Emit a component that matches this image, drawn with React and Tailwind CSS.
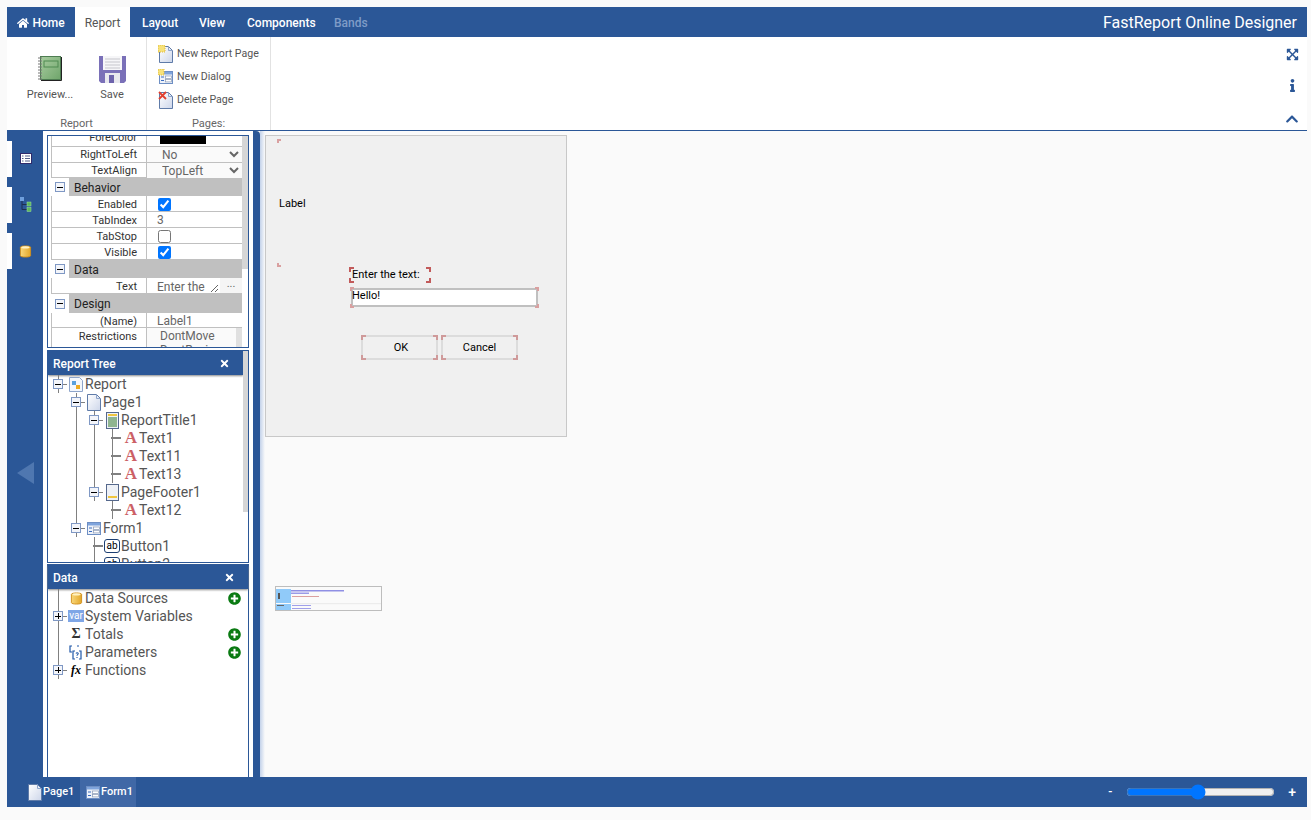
import React from 'react';
import { FaHome, FaExpandArrowsAlt, FaInfo, FaChevronUp, FaTimes, FaPlusCircle } from 'react-icons/fa';

const FONT = "font-['Roboto',_Tahoma,_sans-serif]";

const PageIcon = ({ star, cross }) => (
  <svg width="16" height="18" viewBox="0 0 16 18">
    <defs>
      <linearGradient id="pageFill" x1="0" y1="0" x2="1" y2="1">
        <stop offset="0" stopColor="#ffffff" />
        <stop offset="1" stopColor="#cdd6ea" />
      </linearGradient>
    </defs>
    <path d="M1.5 1.5h9l4 4v12h-13z" fill="url(#pageFill)" stroke="#5f7ba8" />
    <path d="M10.5 1.5v4h4" fill="none" stroke="#8ea5cb" />
    {star && <rect x="0" y="0" width="7" height="7" fill="#f7e27a" stroke="#e0b93a" strokeDasharray="1 1" />}
    {cross && <path d="M1 1l7 7M8 1L1 8" stroke="#e2402f" strokeWidth="1.8" />}
  </svg>
);

const FormIcon = ({ star }) => (
  <svg width="16" height="16" viewBox="0 0 16 16">
    <rect x="1.5" y="2.5" width="13" height="12" fill="#eef2f9" stroke="#6e8fc4" />
    <rect x="2" y="3" width="12" height="2.5" fill="#7fa4dc" />
    <path d="M3 8h3M3 11.5h3" stroke="#3b6cc0" strokeWidth="1.2" />
    <rect x="7.5" y="7" width="6" height="2.4" fill="#fff" stroke="#8a9ab5" strokeWidth=".7" />
    <rect x="7.5" y="10.5" width="6" height="2.4" fill="#fff" stroke="#8a9ab5" strokeWidth=".7" />
    {star && <rect x="0" y="0" width="6" height="6" fill="#f7e27a" stroke="#e0b93a" strokeDasharray="1 1" />}
  </svg>
);

const NotebookIcon = () => (
  <svg width="24" height="25" viewBox="0 0 24 25">
    <defs>
      <linearGradient id="bookFill" x1="0" y1="0" x2="1" y2="1">
        <stop offset="0" stopColor="#a9cda0" />
        <stop offset="1" stopColor="#6fa56b" />
      </linearGradient>
    </defs>
    <rect x="2.5" y=".5" width="20" height="23" fill="url(#bookFill)" stroke="#4e7d52" />
    <path d="M23.5 1v23.5H3" stroke="#222" fill="none" />
    <rect x="6" y="5" width="14" height="6" fill="none" stroke="#4e8a50" />
    <path d="M0 2h4M0 5h4M0 8h4M0 11h4M0 14h4M0 17h4M0 20h4M0 23h4" stroke="#777" strokeWidth="1.2" />
  </svg>
);

const FloppyIcon = () => (
  <svg width="27" height="27" viewBox="0 0 27 27">
    <path d="M0 0h27v25l-2 2H2l-2-2z" fill="#7a70b8" />
    <rect x="4" y="0" width="19" height="14" fill="#f6f6f8" />
    <path d="M6 3h15M6 6h15M6 9h15M6 12h15" stroke="#c6c6cc" />
    <rect x="6" y="17" width="15" height="10" fill="#e8e8ee" />
    <rect x="10" y="19" width="5" height="8" fill="#6d63ac" />
  </svg>
);

const TableIcon = () => (
  <svg width="12" height="11" viewBox="0 0 12 11" className="-mt-[2px]">
    <rect x=".5" y=".5" width="11" height="10" fill="#fff" stroke="#2f2a6b" />
    <path d="M2 3h1.5M5 3h5M2 5.5h1.5M5 5.5h5M2 8h1.5M5 8h5" stroke="#55608c" />
  </svg>
);

const TreeSmallIcon = () => (
  <svg width="12" height="15" viewBox="0 0 12 15" className="-mt-[2px]">
    <rect x="0" y="0" width="4" height="4" fill="#6f9fdc" />
    <path d="M2 4v8.5h5M2 7.5h5" stroke="#1f2f4f" fill="none" />
    <rect x="7" y="5" width="4" height="4" fill="#5cb85c" stroke="#9fe09f" strokeWidth=".5" />
    <rect x="7" y="10.5" width="4" height="4" fill="#5cb85c" stroke="#9fe09f" strokeWidth=".5" />
  </svg>
);

const DbIcon = ({ size = 14 }) => (
  <svg width={size} height={size} viewBox="0 0 14 14">
    <defs>
      <linearGradient id="dbFill" x1="0" y1="0" x2="1" y2="0">
        <stop offset="0" stopColor="#f9d77a" />
        <stop offset="1" stopColor="#e3a72a" />
      </linearGradient>
    </defs>
    <path d="M1.5 2.5C1.5 .5 12.5 .5 12.5 2.5v9c0 2-11 2-11 0z" fill="url(#dbFill)" stroke="#d18f1c" />
    <ellipse cx="7" cy="2.6" rx="4.4" ry="1.2" fill="#fff2c4" />
  </svg>
);

const ReportIcon = () => (
  <svg width="14" height="15" viewBox="0 0 14 15">
    <path d="M.5.5h10l3 3v11H.5z" fill="#f4f7fc" stroke="#8ea5cb" />
    <rect x="3" y="4" width="4" height="4" fill="#5aa0dc" />
    <rect x="7" y="8" width="4" height="4" fill="#eeaa1f" />
  </svg>
);

const BandIcon = ({ bottom, fill }) => (
  <svg width="13" height="17" viewBox="0 0 13 17">
    <rect x=".5" y=".5" width="12" height="16" fill="#eef1f7" stroke="#55688c" />
    {fill && <rect x="2" y="5" width="9" height="10" fill="#8fb58f" />}
    <rect x="2" y={bottom ? 12 : 2} width="9" height="2" fill="#efc53f" />
  </svg>
);

const TextIcon = () => (
  <span className="w-[18px] pl-[2px] text-center font-['Liberation_Serif',_serif] text-[17px] leading-[18px] font-bold text-[#cc6066]">A</span>
);

const ButtonIcon = () => (
  <span className="flex h-[14px] w-[16px] items-center justify-center rounded-[3px] border border-[#1c3f72] bg-white text-[10px] leading-none text-black">ab</span>
);

const ParamIcon = () => (
  <svg width="14" height="15" viewBox="0 0 14 15">
    <path d="M3 1H1v6h2M8 1h2" stroke="#1f57a8" fill="none" strokeWidth="1.2" />
    <path d="M6 6H4v8h2M10 6h2v8h-2" stroke="#1f57a8" fill="none" strokeWidth="1.2" />
    <path d="M7 8.5c.5-1.2 2.4-1 2.2.3-.1.9-1.2.9-1.2 2M8 12v1" stroke="#1f57a8" fill="none" strokeWidth="1.1" />
  </svg>
);

const TreeCell = ({ kind }) => {
  const isExp = kind === 'minus' || kind === 'plus';
  return (
    <span className="relative h-[18px] w-[18px] shrink-0">
      {kind === 'line' && <span className="absolute top-0 bottom-0 left-[8.5px] w-px bg-[#808080]" />}
      {kind === 'node' && (
        <>
          <span className="absolute top-0 bottom-0 left-[8.5px] w-px bg-[#808080]" />
          <span className="absolute top-[8px] left-[8px] h-[2px] w-[10px] bg-[#808080]" />
        </>
      )}
      {isExp && (
        <>
          <span className="absolute top-0 bottom-0 left-[8.5px] w-px bg-[#808080]" />
          <span className="absolute top-[8.5px] left-[12px] h-px w-[6px] bg-[#808080]" />
          <span className="absolute top-[4px] left-[4px] flex h-[10px] w-[10px] items-center justify-center border border-[#7f98c4] bg-[#f3f5fa]">
            <span className="h-px w-[6px] bg-black" />
            {kind === 'plus' && <span className="absolute h-[6px] w-px bg-black" />}
          </span>
        </>
      )}
    </span>
  );
};

const TreeRow = ({ cells, icon, text, add }) => (
  <div className="flex h-[18px] items-center">
    {cells.map((c, i) => <TreeCell key={i} kind={c} />)}
    <span className="flex h-[18px] w-[18px] shrink-0 items-center justify-center">{icon}</span>
    <span className="text-[14px] leading-[18px] whitespace-nowrap text-[#555]">{text}</span>
    {add && <FaPlusCircle className="mr-[2px] ml-auto text-[13px] text-[#0a7a12]" />}
  </div>
);

const PropRow = ({ name, children, h = 'h-[16px]', lead = 'leading-[18px]' }) => (
  <div className={`flex border-b border-[#c0c0c0] ${h}`}>
    <div className={`w-[96px] border-r border-l border-[#c0c0c0] pr-[9px] text-right text-[11px] text-[#333] ${lead}`}>{name}</div>
    <div className="flex w-[95px] items-center pl-[10px] text-[12px] leading-[15px] text-[#666]">{children}</div>
  </div>
);

const PropGroup = ({ name, h = 'h-[18px]' }) => (
  <div className={`flex ${h}`}>
    <div className="flex w-[18px] items-center justify-center bg-white">
      <span className="flex h-[10px] w-[10px] items-center justify-center border border-[#7f98c4] bg-[#f3f5fa]">
        <span className="h-px w-[6px] bg-black" />
      </span>
    </div>
    <div className="flex-1 bg-[#c0c0c0] pl-[5px] text-[12px] leading-[20px] text-[#222]">{name}</div>
  </div>
);

const PanelHeader = ({ title }) => (
  <div className="flex h-[24px] shrink-0 items-center justify-between bg-[#2b5797] pr-[13px] pl-[5px] shadow-[0_1px_2px_#888]">
    <span className="pt-[1px] text-[12px] font-medium text-white">{title}</span>
    <FaTimes className="text-[11px] text-white" />
  </div>
);

// selection marks that sit on the corners of a dialog control
const Corners = ({ tone = 'border-[#d9a0a0]', size = 'h-[5px] w-[5px]', leftOnly }) => (
  <>
    <span className={`absolute top-0 left-0 border-t-2 border-l-2 ${tone} ${size}`} />
    <span className={`absolute bottom-0 left-0 border-b-2 border-l-2 ${tone} ${size}`} />
    {!leftOnly && <span className={`absolute top-0 right-0 border-t-2 border-r-2 ${tone} ${size}`} />}
    {!leftOnly && <span className={`absolute right-0 bottom-0 border-r-2 border-b-2 ${tone} ${size}`} />}
  </>
);

const Select = ({ value }) => (
  <select defaultValue={value} className="-ml-[10px] h-[15px] w-[95px] bg-[#fafafa] pl-[11px] text-[12px] leading-[15px] text-[#666]">
    <option>{value}</option>
  </select>
);

const SideTab = ({ children }) => (
  <div className="flex h-[36px] items-center justify-center border-l-[5px] border-white pr-[4px]">{children}</div>
);

const MiniThumb = () => (
  <svg width="107" height="25" viewBox="0 0 107 25" className="block">
    <rect x=".5" y=".5" width="106" height="24" fill="#fafafa" stroke="#bdbdbd" />
    <rect x="1" y="3" width="15" height="14" fill="#90caf9" />
    <rect x="1" y="18" width="15" height="6" fill="#90caf9" />
    <rect x="3" y="7" width="2" height="6" fill="#555" />
    <rect x="2" y="19" width="7" height="1" fill="#666" />
    <rect x="16" y="4" width="53" height="1.5" fill="#8f8fe4" />
    <rect x="16" y="6.5" width="18" height="1.5" fill="#9a9ae8" />
    <rect x="17" y="10" width="27" height="1" fill="#dba0a0" />
    <rect x="17" y="19" width="19" height="1" fill="#a0a0ea" />
    <rect x="17" y="22" width="19" height="1" fill="#a0a0ea" />
    <rect x="16" y="17.5" width="90" height=".6" fill="#ddd" />
  </svg>
);

export default function App() {
  return (
    <div className={`${FONT} h-[820px] w-[1311px] overflow-hidden bg-[#fafafa] pt-[7px] pr-[4px] pl-[7px]`}>
      {/* top tabs */}
      <div className="flex h-[30px] items-center bg-[#2b5797] pt-[1px] text-[12px] font-medium text-white">
        <div className="flex w-[68px] items-center justify-center gap-[3px]"><FaHome className="text-[12px]" />Home</div>
        <div className="-mt-[1px] flex h-[30px] w-[55px] items-center justify-center bg-white pt-[1px] font-normal text-[#555]">Report</div>
        <div className="ml-[12px] w-[57px]">Layout</div>
        <div className="w-[48px]">View</div>
        <div className="w-[87px]">Components</div>
        <div className="text-[#7f9cc7]">Bands</div>
        <div className="ml-auto pr-[10px] text-[16px] font-normal">FastReport Online Designer</div>
      </div>

      {/* ribbon */}
      <div className="flex h-[94px] border-b border-[#2b5797] bg-white text-[11px] text-[#555]">
        <div className="flex w-[140px] flex-col border-r border-[#e2e2e2] pt-[19px]">
          <div className="flex">
            <div className="flex w-[86px] flex-col items-center">
              <NotebookIcon />
              <span className="mt-[6px]">Preview...</span>
            </div>
            <div className="flex w-[38px] flex-col items-center">
              <FloppyIcon />
              <span className="mt-[4px]">Save</span>
            </div>
          </div>
          <div className="mt-auto text-center leading-[12px] text-[#666]">Report</div>
        </div>
        <div className="flex w-[124px] flex-col border-r border-[#e2e2e2] pt-[5px] pl-[11px] text-[10.6px]">
          <div className="flex h-[23px] items-center gap-[3px]"><PageIcon star />New Report Page</div>
          <div className="flex h-[23px] items-center gap-[3px]"><FormIcon star />New Dialog</div>
          <div className="flex h-[23px] items-center gap-[3px]"><PageIcon cross />Delete Page</div>
          <div className="mt-auto -ml-[11px] text-center text-[11px] leading-[12px] text-[#666]">Pages:</div>
        </div>
        <div className="ml-auto flex w-[30px] flex-col items-center pt-[11px] text-[13px] text-[#2b5797]">
          <FaExpandArrowsAlt />
          <FaInfo className="mt-[18px]" />
          <FaChevronUp className="mt-[20px] text-[14px]" />
        </div>
      </div>

      {/* main */}
      <div className="flex h-[646px]">
        <div className="flex w-[36px] shrink-0 flex-col gap-[10px] bg-[#2b5797] pt-[10px]">
          <SideTab><TableIcon /></SideTab>
          <SideTab><TreeSmallIcon /></SideTab>
          <SideTab><DbIcon size={13} /></SideTab>
          <div className="mt-[183px] ml-[10px] h-0 w-0 border-y-[11px] border-r-[17px] border-y-transparent border-r-[#4f77b0]" />
        </div>

        <div className="flex w-[210px] shrink-0 flex-col bg-white pt-[4px] pr-[4px] pl-[4px]">
          {/* properties */}
          <div className="flex h-[213px] shrink-0 overflow-hidden border border-[#2b5797] pl-[3px]">
            <div className="-mt-[5px] w-[191px] shrink-0">
              <PropRow name="ForeColor" lead="leading-[14px]"><span className="ml-[3px] h-[10px] w-[46px] bg-black" /></PropRow>
              <PropRow name="RightToLeft" lead="leading-[16px]"><Select value="No" /></PropRow>
              <PropRow name="TextAlign" h="h-[15px]" lead="leading-[16px]"><Select value="TopLeft" /></PropRow>
              <PropGroup name="Behavior" />
              <PropRow name="Enabled"><input type="checkbox" defaultChecked className="m-0 mt-[2px] ml-[1px] h-[13px] w-[13px]" /></PropRow>
              <PropRow name="TabIndex"><span className="mt-[2px]">3</span></PropRow>
              <PropRow name="TabStop"><input type="checkbox" className="m-0 mt-[2px] ml-[1px] h-[13px] w-[13px]" /></PropRow>
              <PropRow name="Visible"><input type="checkbox" defaultChecked className="m-0 mt-[2px] ml-[1px] h-[13px] w-[13px]" /></PropRow>
              <PropGroup name="Data" />
              <PropRow name="Text">
                <textarea readOnly defaultValue="Enter the" rows={1} className="h-[15px] w-[62px] shrink-0 overflow-hidden pt-[2px] text-[12px] leading-[15px] text-[#666]" />
                <span className="ml-[1px] flex h-[15px] flex-1 justify-center bg-[#f5f5f5] text-[11px] leading-[12px]">...</span>
              </PropRow>
              <PropGroup name="Design" h="h-[19px]" />
              <PropRow name="(Name)" h="h-[15px]" lead="leading-[18px]"><span className="mt-[2px]">Label1</span></PropRow>
              <PropRow name="Restrictions" h="h-[20px]">
                <div className="-ml-[10px] flex h-[19px] flex-1 overflow-hidden bg-[#fafafa]">
                  <div className="flex-1 pt-[1px] pl-[13px] text-[12px] leading-[14px]">DontMove<br />DontResize</div>
                  <div className="w-[6px] bg-[#e0e0e0]" />
                </div>
              </PropRow>
            </div>
            <div className="h-[133px] w-[6px] bg-[#d6d6d6]" />
          </div>

          {/* report tree */}
          <div className="mt-[2px] flex h-[213px] shrink-0 overflow-hidden border border-[#2b5797]">
            <div className="w-[195px] shrink-0 overflow-hidden">
              <PanelHeader title="Report Tree" />
              <div className="pl-[1px]">
                <TreeRow cells={['minus']} icon={<ReportIcon />} text="Report" />
                <TreeRow cells={['', 'minus']} icon={<PageIcon />} text="Page1" />
                <TreeRow cells={['', 'line', 'minus']} icon={<BandIcon fill />} text="ReportTitle1" />
                <TreeRow cells={['', 'line', 'line', 'node']} icon={<TextIcon />} text="Text1" />
                <TreeRow cells={['', 'line', 'line', 'node']} icon={<TextIcon />} text="Text11" />
                <TreeRow cells={['', 'line', 'line', 'node']} icon={<TextIcon />} text="Text13" />
                <TreeRow cells={['', 'line', 'minus']} icon={<BandIcon bottom />} text="PageFooter1" />
                <TreeRow cells={['', 'line', '', 'node']} icon={<TextIcon />} text="Text12" />
                <TreeRow cells={['', 'minus']} icon={<FormIcon />} text="Form1" />
                <TreeRow cells={['', '', 'node']} icon={<ButtonIcon />} text="Button1" />
                <TreeRow cells={['', '', 'node']} icon={<ButtonIcon />} text="Button2" />
              </div>
            </div>
            <div className="h-[161px] w-[6px] bg-[#d6d6d6]" />
          </div>

          {/* data */}
          <div className="mt-[1px] flex min-h-0 flex-1 flex-col border-x border-t border-[#2b5797]">
            <PanelHeader title="Data" />
            <div className="pr-[5px] pl-[1px]">
              <TreeRow cells={['line']} icon={<DbIcon size={13} />} text="Data Sources" add />
              <TreeRow
                cells={['plus']}
                icon={<span className="h-[12px] w-[16px] bg-[#7fa6e6] text-center text-[10px] leading-[11px] text-white">var</span>}
                text="System Variables"
              />
              <TreeRow cells={['line']} icon={<span className="font-['Liberation_Serif',_serif] text-[14px] leading-none font-bold text-[#333]">Σ</span>} text="Totals" add />
              <TreeRow cells={['line']} icon={<ParamIcon />} text="Parameters" add />
              <TreeRow cells={['plus']} icon={<span className="font-['Liberation_Serif',_serif] text-[12px] leading-none font-bold text-black italic">fx</span>} text="Functions" />
            </div>
          </div>
        </div>

        {/* splitter */}
        <div className="w-[7px] shrink-0 rounded-tr-[4px] bg-[#2b5797]" />
        <div className="w-[5px] shrink-0 bg-gradient-to-r from-[#c3d2ea] to-[#fafafa]" />

        {/* canvas */}
        <div className="relative flex-1">
          <div className="absolute top-[4px] left-0 h-[302px] w-[302px] border border-[#c8c8c8] bg-[#f0f0f0] text-[11px] text-black">
            <div className="absolute top-[3px] left-[11px] h-[128px] w-[40px]">
              <Corners size="h-[4px] w-[4px]" leftOnly />
            </div>
            <div className="absolute top-[61px] left-[13px] leading-[14px]">Label</div>
            <div className="absolute top-[131px] left-[83px] h-[16px] w-[82px] pl-[3px] leading-[16px]">
              Enter the text:
              <Corners tone="border-[#c25a5a]" />
            </div>
            <div className="absolute top-[151px] left-[84px] h-[21px] w-[189px] p-[1px]">
              <div className="h-full border-2 border-[#c0c0c0] bg-white leading-[11px]">
                <span className="-ml-[1px]">Hello!</span>
              </div>
              <Corners size="h-[4px] w-[4px]" />
            </div>
            <div className="absolute top-[199px] left-[95px] h-[25px] w-[77px]">
              <div className="flex h-full items-center justify-center border-2 border-[#dcdcdc] pt-[1px] pl-[3px]">OK</div>
              <Corners size="h-[5px] w-[5px]" tone="border-[#cf9a9a]" />
            </div>
            <div className="absolute top-[199px] left-[175px] h-[25px] w-[77px]">
              <div className="flex h-full items-center justify-center border-2 border-[#dcdcdc] pt-[1px]">Cancel</div>
              <Corners size="h-[5px] w-[5px]" tone="border-[#cf9a9a]" />
            </div>
          </div>
          <div className="absolute top-[455px] left-[10px]"><MiniThumb /></div>
        </div>
      </div>

      {/* footer */}
      <div className="flex h-[30px] items-center bg-[#2b5797] text-[11px] font-medium text-white">
        <div className="ml-[20px] flex h-full w-[53px] items-center"><PageIcon /><span className="pt-[1px]">Page1</span></div>
        <div className="flex h-full w-[56px] items-center bg-[#4068a6] pl-[5px]"><FormIcon /><span className="pt-[1px]">Form1</span></div>
        <div className="ml-auto flex items-center">
          <span className="mr-[14px] text-[12px]">-</span>
          <input type="range" min="0" max="100" defaultValue="48" className="m-0 h-[16px] w-[149px]" />
          <span className="mr-[11px] ml-[13px] text-[14px]">+</span>
        </div>
      </div>
    </div>
  );
}
